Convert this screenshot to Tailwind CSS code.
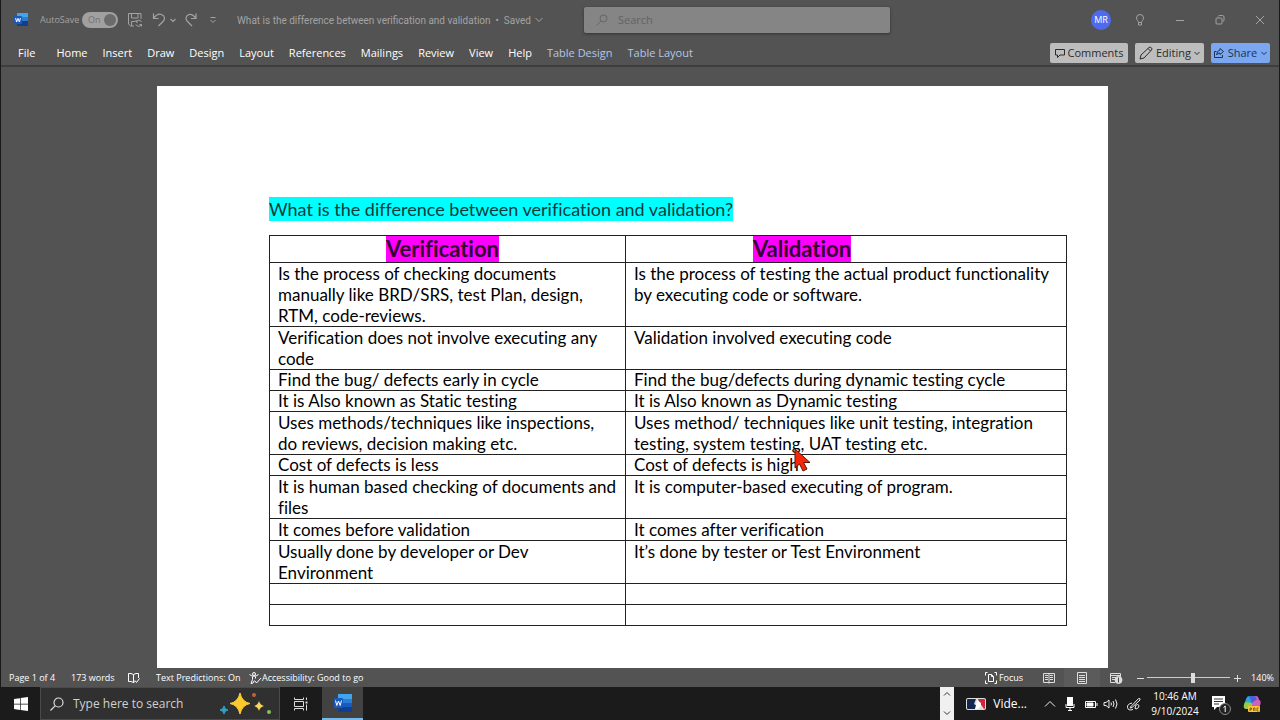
<!DOCTYPE html>
<html lang="en">
<head>
  <meta charset="utf-8">
  <meta name="viewport" content="width=device-width, initial-scale=1">
  <title>What is the difference between verification and validation - Word</title>
  <script src="https://cdn.jsdelivr.net/npm/@tailwindcss/browser@4"></script>
</head>
<body class="flex h-screen flex-col overflow-hidden border-x border-[#1a1a1a] bg-[#535353] font-['Open_Sans',sans-serif] text-white">

  <!-- Title bar -->
  <header class="grid h-10 shrink-0 grid-cols-[583px_306px_1fr] items-center text-[#a3a3a3]">
    <div class="flex items-center pl-3">
      <svg class="size-4" viewBox="0 0 16 16">
        <rect x="4" y="1" width="11" height="4" fill="#41a5ee"/>
        <rect x="4" y="5" width="11" height="4" fill="#2b7cd3"/>
        <rect x="4" y="9" width="11" height="5" fill="#103f91"/>
        <rect x="1" y="4" width="8" height="8" rx="1" fill="#185abd"/>
        <path d="M2.6 6l1 4L5 6.4 6.4 10l1-4" fill="none" stroke="#fff"/>
      </svg>
      <label for="autosave" class="ml-[11px] w-10 text-[9px] whitespace-nowrap">AutoSave</label>
      <button id="autosave" role="switch" aria-checked="true" class="ml-[2px] flex h-4 w-9 items-center justify-between rounded-full bg-[#a0a0a0] pr-[2px] pl-[6px] text-[9px] text-[#737373]">On<span class="size-3 rounded-full bg-[#6b6b6b]"></span></button>
      <button class="ml-[9px]" aria-label="Save">
        <svg class="size-4" viewBox="0 0 16 16" fill="none" stroke="currentColor">
          <path d="M7 14H3.500L1.500 12V1.500h12.500V7M4.500 1.500V6h6.500V1.500M4.500 14V9.500H8M14.500 10a3 3 0 0 0-5.500 0M9 8v2h2M9 12.500a3 3 0 0 0 5.500 0M14.500 14.500v-2h-2"/>
        </svg>
      </button>
      <button class="ml-2" aria-label="Undo">
        <svg class="size-4" viewBox="0 0 16 16" fill="none" stroke="currentColor" stroke-width="1.200">
          <path d="M2.500 1.500v5h5M2.500 6.500C5 3 8 1.500 10.500 2.500c4 1.500 3.500 5 1.500 7L7.500 14"/>
        </svg>
      </button>
      <svg class="ml-[2px] size-2" viewBox="0 0 8 8" fill="none" stroke="currentColor" stroke-width="1.200"><path d="M1.500 3L4 5.500 6.500 3"/></svg>
      <button class="ml-[6px]" aria-label="Redo">
        <svg class="size-4" viewBox="0 0 16 16" fill="none" stroke="currentColor" stroke-width="1.200">
          <path d="M13 1.500v5H8M13 6.500C10.500 3 8.500 2 6 2.500c-4 1.500-3.500 5-1.500 7L9 14"/>
        </svg>
      </button>
      <button class="ml-[10px]" aria-label="Customize Quick Access Toolbar">
        <svg class="size-2" viewBox="0 0 8 8" fill="none" stroke="currentColor"><path d="M1.500 1.500h5M1.500 4L4 6.500 6.500 4"/></svg>
      </button>
      <button class="ml-5 flex items-center gap-1 font-[Roboto,sans-serif] text-[10px] whitespace-nowrap">What is the difference between verification and validation&nbsp; • &nbsp;Saved
        <svg class="size-2" viewBox="0 0 8 8" fill="none" stroke="currentColor"><path d="M.5 2L4 5.500 7.500 2"/></svg>
      </button>
    </div>
    <div class="flex h-[26px] items-center gap-[10px] rounded-xs bg-[#858585] px-3 shadow-[0_1px_3px_#333]">
      <svg class="size-3" viewBox="0 0 12 12" fill="none" stroke="#666"><circle cx="7.500" cy="4.500" r="3.500"/><path d="M5 7L.5 11.500"/></svg>
      <input type="text" aria-label="Search" placeholder="Search" class="min-w-0 flex-1 text-[11px] outline-none placeholder:text-[#636363]">
    </div>
    <div class="flex items-center justify-end pr-[11px]">
      <button class="size-5 rounded-full bg-[#4f6bed] text-[9px] text-white">MR</button>
      <button class="ml-[21px]" aria-label="Tips">
        <svg class="h-3 w-4" viewBox="0 0 16 12" fill="none" stroke="currentColor"><path d="M6.500 8.500C6.500 7 4.500 6 4.500 4a3.500 3.500 0 0 1 7 0c0 2-2 3-2 4.500zM6.500 8.500v2.500h3V8.500"/></svg>
      </button>
      <button class="ml-6" aria-label="Minimize">
        <svg class="h-3 w-4" viewBox="0 0 16 12" stroke="currentColor"><path d="M4 6.500h8"/></svg>
      </button>
      <button class="ml-6" aria-label="Restore">
        <svg class="h-3 w-4" viewBox="0 0 16 12" fill="none" stroke="currentColor"><rect x="4" y="4" width="6" height="6" rx="1"/><path d="M6 2.500q.5-1 1.500-1h3q1.500 0 1.500 1.500v3q0 1-1 1.500"/></svg>
      </button>
      <button class="ml-6" aria-label="Close">
        <svg class="h-3 w-4" viewBox="0 0 16 12" stroke="currentColor"><path d="M4 2l8 8M12 2l-8 8"/></svg>
      </button>
    </div>
  </header>

  <!-- Ribbon tabs -->
  <nav class="flex h-[27px] shrink-0 items-center gap-[15px] border-b-2 border-[#3d3d3d] pt-px pr-[9px] pl-[17px] text-[11px] whitespace-nowrap">
    <button class="mr-[6px]">File</button>
    <button>Home</button>
    <button>Insert</button>
    <button>Draw</button>
    <button>Design</button>
    <button>Layout</button>
    <button>References</button>
    <button>Mailings</button>
    <button>Review</button>
    <button>View</button>
    <button>Help</button>
    <button class="text-[#b4c7e7]">Table Design</button>
    <button class="text-[#b4c7e7]">Table Layout</button>
    <div class="ml-auto flex gap-[7px] text-[#2b2b2b]">
      <button class="flex h-5 w-[78px] items-center justify-center gap-[3px] rounded-xs bg-[#bdbdbd]">
        <svg class="size-[10px]" viewBox="0 0 10 10" fill="none" stroke="currentColor"><path d="M.5 1.500h9v5.500H5L2.500 9.500V7h-2z"/></svg>
        Comments
      </button>
      <button class="flex h-5 w-[69px] items-center justify-center gap-[3px] rounded-xs bg-[#bdbdbd]">
        <svg class="size-[14px]" viewBox="0 0 14 14" fill="none" stroke="currentColor"><path d="M1 13l1-4L10 1.500q1-1 2.300.2t.2 2.300L5 12zM9 2.500L11.500 5"/></svg>
        Editing
        <svg class="size-[6px]" viewBox="0 0 6 6" fill="none" stroke="currentColor"><path d="M.5 2L3 4.500 5.500 2"/></svg>
      </button>
      <button class="flex h-5 w-[59px] items-center justify-center gap-1 rounded-xs bg-[#7ba7f0] text-[#1f3255]">
        <svg class="size-[10px]" viewBox="0 0 10 10" fill="none" stroke="currentColor"><path d="M2.500 3.500h-2v6h8V7M6 .5l3.500 3L6 6.500V5Q3.500 5 2.500 7 3 2.500 6 2z"/></svg>
        Share
        <svg class="size-[6px]" viewBox="0 0 6 6" fill="none" stroke="currentColor"><path d="M.5 2L3 4.500 5.500 2"/></svg>
      </button>
    </div>
  </nav>

  <!-- Document -->
  <main class="relative flex min-h-0 flex-1 justify-center overflow-hidden pt-[19px] pr-[15px] font-[Lato,sans-serif] text-black [font-variant-ligatures:none]">
    <article class="w-[951px] bg-white pt-[111px] pr-[41px] pl-[112px] text-[17px]">
      <h1 class="text-lg leading-6"><span class="inline-block h-6 bg-[#00ffff] text-[#063c3c]">What is the difference between verification and validation?</span></h1>
      <table class="mt-[14px] w-full table-fixed border-collapse text-left align-top leading-[21px] [&_td]:border [&_td]:border-[#222] [&_td]:py-0 [&_td]:pr-0 [&_td]:pl-2 [&_td]:align-top [&_th]:border [&_th]:border-[#222] [&_th]:p-0">
        <colgroup><col class="w-[356px]"><col></colgroup>
        <thead>
          <tr class="text-[22px] leading-[26px]">
            <th class="text-center"><span class="mr-[10px] inline-block bg-[#ff00ff] text-[#330033]">Verification</span></th>
            <th class="text-center"><span class="mr-[88px] inline-block bg-[#ff00ff] text-[#330033]">Validation</span></th>
          </tr>
        </thead>
        <tbody>
          <tr>
            <td>Is the process of checking documents<br>manually like BRD/SRS, test Plan, design,<br>RTM, code-reviews.</td>
            <td>Is the process of testing the actual product functionality<br>by executing code or software.</td>
          </tr>
          <tr>
            <td>Verification does not involve executing any<br>code</td>
            <td>Validation involved executing code</td>
          </tr>
          <tr class="leading-5">
            <td>Find the bug/ defects early in cycle</td>
            <td>Find the bug/defects during dynamic testing cycle</td>
          </tr>
          <tr class="leading-5">
            <td>It is Also known as Static testing</td>
            <td>It is Also known as Dynamic testing</td>
          </tr>
          <tr>
            <td>Uses methods/techniques like inspections,<br>do reviews, decision making etc.</td>
            <td>Uses method/ techniques like unit testing, integration<br>testing, system testing, UAT testing etc.</td>
          </tr>
          <tr class="leading-5">
            <td>Cost of defects is less</td>
            <td>Cost of defects is high</td>
          </tr>
          <tr>
            <td>It is human based checking of documents and<br>files</td>
            <td>It is computer-based executing of program.</td>
          </tr>
          <tr>
            <td>It comes before validation</td>
            <td>It comes after verification</td>
          </tr>
          <tr>
            <td>Usually done by developer or Dev<br>Environment</td>
            <td>It’s done by tester or Test Environment</td>
          </tr>
          <tr class="h-[21px]"><td></td><td></td></tr>
          <tr class="h-[21px]"><td></td><td></td></tr>
        </tbody>
      </table>
    </article>
    <!-- Mouse pointer -->
    <svg class="absolute top-[381px] left-[793px] h-6 w-[18px]" viewBox="0 0 18 24"><path d="M1 1v19l4.500-4 3.500 7 4-2-3.500-6.500H16z" fill="#f5280a" stroke="#5c1408"/></svg>
  </main>

  <!-- Status bar -->
  <footer class="flex h-[19px] shrink-0 items-center bg-[#535353] pr-[5px] pl-2 text-[9px] whitespace-nowrap">
    <span class="w-[62px]">Page 1 of 4</span>
    <span class="w-14">173 words</span>
    <svg class="h-3 w-[14px]" viewBox="0 0 14 12" fill="none" stroke="currentColor"><path d="M6.500 2.500Q4 1 1.500 1.500v8Q4 9 6.500 10.500zM6.500 2.500Q9 1 11.500 1.500V6M6.500 10.500L8 9.500M8 8.500l1.500 2 3-4"/></svg>
    <span class="ml-[15px] w-[92px]">Text Predictions: On</span>
    <svg class="h-3 w-[14px]" viewBox="0 0 14 12" fill="none" stroke="currentColor"><circle cx="6" cy="2" r="1.500"/><path d="M1.500 2.500Q6 6 10.500 2.500M4.500 4.500v3L3 11.500l2-.5 1-2M7.500 4.500v2M6.500 8.500l2 2.500 4.500-5"/></svg>
    <span>Accessibility: Good to go</span>
    <button class="ml-auto flex items-center gap-[2px]">
      <svg class="size-3" viewBox="0 0 12 12" fill="none" stroke="currentColor"><path d="M2.500.5h-2v3M9.500.5h2v3M.5 8.500v3h2M11.500 8.500v3h-2M3.500 2.500h3l2 2v5h-5zM6.500 2.500v2h2"/></svg>
      Focus
    </button>
    <button class="ml-5" aria-label="Read Mode">
      <svg class="size-3" viewBox="0 0 12 12" fill="none" stroke="#ddd"><path d="M.5 1.500h11v9H.5zM6 1.500v10M2 3.500h3M2 5.500h3M2 7.500h3M7 3.500h3M7 5.500h3M7 7.500h3"/></svg>
    </button>
    <button class="ml-[9px] flex h-[19px] w-9 items-center justify-center bg-[#5b5b5b]" aria-label="Print Layout">
      <svg class="size-3" viewBox="0 0 12 12" fill="none" stroke="#ddd"><path d="M1.500.5h9v11h-9zM3 3.500h6M3 5.500h6M3 7.500h6M3 9.500h6"/></svg>
    </button>
    <button class="ml-[9px]" aria-label="Web Layout">
      <svg class="h-3 w-[14px]" viewBox="0 0 14 12" fill="none" stroke="#ddd"><path d="M1.500 1.500h10V5M1.500 1.500v9H6M1.500 3.500h10M3 5.500h4M3 7.500h3"/><circle cx="9.500" cy="8" r="3.500" fill="#ddd"/><path d="M9.500 5.500v5" stroke="#444"/></svg>
    </button>
    <button class="ml-[13px]" aria-label="Zoom out">
      <svg class="size-2" viewBox="0 0 8 8" stroke="#ddd"><path d="M1 4.500h7"/></svg>
    </button>
    <input type="range" min="10" max="200" value="116" aria-label="Zoom" class="mx-[3px] h-3 w-[83px] appearance-none bg-linear-to-r from-[#ccc] to-[#ccc] bg-[length:100%_1px] bg-center bg-no-repeat [&::-webkit-slider-thumb]:h-[10px] [&::-webkit-slider-thumb]:w-1 [&::-webkit-slider-thumb]:appearance-none [&::-webkit-slider-thumb]:bg-[#ddd]">
    <button aria-label="Zoom in">
      <svg class="size-2" viewBox="0 0 8 8" stroke="#ddd"><path d="M1 4.500h7M4.500 1v7"/></svg>
    </button>
    <button class="ml-[10px]">140%</button>
  </footer>

  <!-- Taskbar -->
  <div class="flex h-[33px] shrink-0 items-center bg-[#1b1b1b] whitespace-nowrap">
    <button class="flex w-[39px] justify-center" aria-label="Start">
      <svg class="size-[14px]" viewBox="0 0 14 14" fill="#fff"><path d="M0 2l6-.8v5.500H0zM6.700 1.100L14 0v6.700H6.700zM0 7.400h6v5.500L0 12zM6.700 7.400H14V14l-7.300-1z"/></svg>
    </button>
    <label class="flex h-full w-60 items-center border border-[#4a4a4a] bg-[#303030] pr-[6px] pl-[9px]">
      <svg class="size-[14px] shrink-0" viewBox="0 0 14 14" fill="none" stroke="#ddd" stroke-width="1.200"><circle cx="8.500" cy="5.500" r="4.500"/><path d="M5.300 8.700L.5 13.500"/></svg>
      <input type="text" placeholder="Type here to search" aria-label="Type here to search" class="ml-[9px] min-w-0 flex-1 text-xs outline-none placeholder:text-[#d0d0d0]">
      <svg class="h-6 w-[54px] shrink-0" viewBox="0 0 54 24">
        <path d="M21 1Q23 10 31 11.500 23 13 21 22 19 13 11 11.500 19 10 21 1z" fill="#fcca2c" stroke="#fcca2c" stroke-linejoin="round"/>
        <path d="M40 9q1 4 5 5-4 1-5 5-1-4-5-5 4-1 5-5z" fill="#fbd45a"/>
        <path d="M5 14q.5 3.500 4 4-3.500.5-4 4-.5-3.500-4-4 3.500-.5 4-4z" fill="#2fa4c4" stroke="#2fa4c4"/>
        <circle cx="35" cy="3" r="2" fill="#c9603a"/><circle cx="50" cy="20" r="2" fill="#86c25c"/>
      </svg>
    </label>
    <button class="flex w-[42px] justify-center" aria-label="Task View">
      <svg class="h-[14px] w-4" viewBox="0 0 16 14" fill="none" stroke="#ddd"><path d="M1.500.5v2h9v-2M1.500 4.500h9v5h-9zM1.500 13.500v-2h9v2M13.500.5v2.500M13.500 7.500v6"/><path d="M12.500 5.500h2" stroke-width="2"/></svg>
    </button>
    <button class="flex h-full w-[41px] items-center justify-center border-b-2 border-[#76b9ed] bg-[#424242]" aria-label="Word">
      <svg class="h-[18px] w-5" viewBox="0 0 20 18">
        <rect x="5" width="14" height="5" fill="#41a5ee"/><rect x="5" y="5" width="14" height="4" fill="#2b7cd3"/><rect x="5" y="9" width="14" height="4" fill="#185abd"/><rect x="5" y="13" width="14" height="5" fill="#103f91"/>
        <rect x="1" y="4" width="9" height="10" rx="1" fill="#185abd"/><path d="M2.500 6.500l1.300 5 1.700-4.500 1.700 4.500 1.300-5" fill="none" stroke="#fff"/>
      </svg>
    </button>

    <div class="ml-auto flex h-full w-[14px] flex-col items-center justify-between bg-[#f0f0f0] py-[3px]">
      <svg class="size-2" viewBox="0 0 8 8" fill="none" stroke="#333"><path d="M1 5.500L4 2.500l3 3"/></svg>
      <svg class="size-2" viewBox="0 0 8 8" fill="none" stroke="#333"><path d="M1 2.500l3 3 3-3"/></svg>
    </div>
    <button class="ml-3 flex items-center gap-[7px] text-xs">
      <svg class="h-3 w-5" viewBox="0 0 20 12"><rect width="20" height="12" rx="2" fill="#ddd"/><path d="M2 1h8L8 6l3 2-2 3H2q-1 0-1-1V2q0-1 1-1z" fill="#14284f"/><path d="M12 1h6q1 0 1 1v8q0 1-1 1l-2-3-2-2z" fill="#d0243c"/><path d="M11 2l4 3v3l-3 3H9l1-4z" fill="#fff"/></svg>
      Vide...
    </button>
    <div class="ml-[17px] flex items-center">
      <svg class="h-3 w-3" viewBox="0 0 12 12" fill="none" stroke="#eee"><path d="M1 8.500l5-5 5 5"/></svg>
      <svg class="ml-[9px] h-[14px] w-[10px]" viewBox="0 0 10 14" fill="none" stroke="#fff"><rect x="2.500" y=".5" width="5" height="8" fill="#fff"/><path d="M1 7v3.500h8V7M5 10.500V13M3 13.500h4"/></svg>
      <svg class="ml-[9px] h-3 w-[14px]" viewBox="0 0 14 12" fill="none" stroke="#fff"><path d="M1.500 3.500h10v6h-10zM13 5v3"/><path d="M3 5h6v3H3z" fill="#fff"/></svg>
      <svg class="ml-[5px] h-3 w-4" viewBox="0 0 16 12" fill="none" stroke="#eee"><path d="M1 4.500h2L6 2v8L3 7.500H1zM8 4.500q1 1.500 0 3M10 3q2 3 0 6M12.500 1.500q3 4.500 0 9"/></svg>
      <svg class="ml-[7px] h-[14px] w-4" viewBox="0 0 16 14" fill="none" stroke="#eee"><path d="M4.500 10L12.500 1.500q2-.5 1.500 1.500L6 10.500 4 11zM6 6Q1 7 1.500 10.500 2 14 7 12.500M9 11.500q0-4 2.500-4 2.500.5 1 3-1.500 2-3.500 1"/></svg>
    </div>
    <time class="ml-[7px] w-[52px] text-center text-[10px] leading-[15px]">10:46 AM<br>9/10/2024</time>
    <button class="ml-[10px]" aria-label="Notifications">
      <svg class="h-6 w-[22px]" viewBox="0 0 22 24"><path d="M1 4h13v11H6l-3 3v-3H1z" fill="#fff"/><path d="M3 7h9M3 9.500h9M3 12h5" stroke="#333"/><circle cx="14" cy="17" r="5.500" fill="#222" stroke="#888"/><path d="M12.500 15.500l1.700-1.500v6" fill="none" stroke="#fff"/></svg>
    </button>
    <button class="mr-[18px] ml-[10px]" aria-label="Copilot">
      <svg class="h-5 w-[18px]" viewBox="0 0 18 20">
        <path d="M6 2h6l-3 11q-.5 2-3 2H3q-3-.5-2-4l2-6q1-3 3-3z" fill="#25a7e0"/>
        <path d="M2 8l-1 3q-1 3.500 2 4h3q2.500 0 3-2l1-4z" fill="#9ccb3f"/>
        <path d="M10 2h3q2 0 2.500 2l.5 2q2 0 1.500 4L16 14H8l2-6q.5-2 3-2z" fill="#d45ec0"/>
        <path d="M6 2h5q2 0 2.500 2l.5 2h-3L9 10z" fill="#4464dd"/>
        <rect x="5" y="12" width="12" height="6" rx="1" fill="#fbc53a"/><path d="M7 17v-3h1.500v1.500H7M10.500 17v-3H12v3M15.500 14H14v3h1.500" fill="none" stroke="#5a4100" stroke-width=".7"/>
      </svg>
    </button>
  </div>
</body>
</html>
